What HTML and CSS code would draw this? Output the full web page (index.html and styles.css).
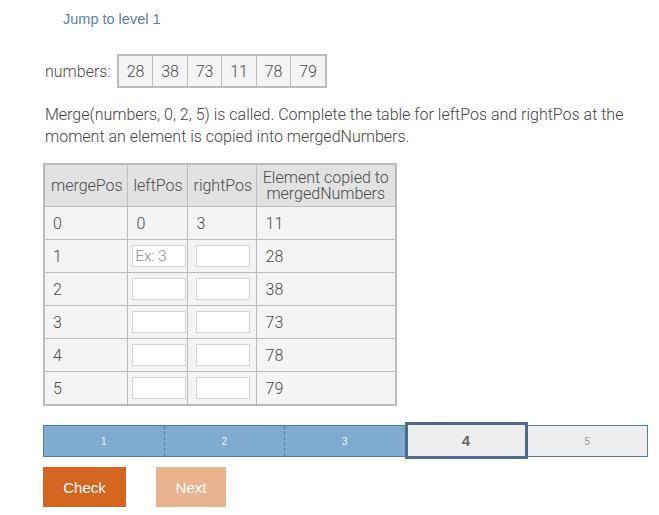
FILE: index.html
```html
<!DOCTYPE html>
<html>
<head>
<meta charset="utf-8">
<link rel="stylesheet" href="styles.css">
</head>
<body>
<div class="page">
  <div class="jump">Jump to level 1</div>
  <div class="numbers-row">
    <span class="numbers-label">numbers:</span>
    <div class="array">
      <span class="cell">28</span><span class="cell">38</span><span class="cell">73</span><span class="cell">11</span><span class="cell">78</span><span class="cell">79</span>
    </div>
  </div>
  <p class="prompt">Merge(numbers, 0, 2, 5) is called. Complete the table for leftPos and rightPos at the moment an element is copied into mergedNumbers.</p>
  <table class="merge-table">
    <colgroup>
      <col class="c1"><col class="c2"><col class="c3"><col class="c4">
    </colgroup>
    <thead>
      <tr><th>mergePos</th><th>leftPos</th><th>rightPos</th><th class="two-line">Element copied to<br>mergedNumbers</th></tr>
    </thead>
    <tbody>
      <tr><td>0</td><td>0</td><td>3</td><td>11</td></tr>
      <tr><td>1</td><td class="in"><input type="text" placeholder="Ex: 3"></td><td class="in"><input type="text"></td><td>28</td></tr>
      <tr><td>2</td><td class="in"><input type="text"></td><td class="in"><input type="text"></td><td>38</td></tr>
      <tr><td>3</td><td class="in"><input type="text"></td><td class="in"><input type="text"></td><td>73</td></tr>
      <tr><td>4</td><td class="in"><input type="text"></td><td class="in"><input type="text"></td><td>78</td></tr>
      <tr><td>5</td><td class="in"><input type="text"></td><td class="in"><input type="text"></td><td>79</td></tr>
    </tbody>
  </table>
  <div class="progress">
    <div class="seg done">1</div>
    <div class="seg done dash">2</div>
    <div class="seg done dash">3</div>
    <div class="seg current">4</div>
    <div class="seg todo">5</div>
  </div>
  <div class="buttons">
    <button class="btn check">Check</button>
    <button class="btn next">Next</button>
  </div>
</div>
</body>
</html>
```
FILE: styles.css
```css
html, body {
  margin: 0;
  padding: 0;
  background: #fff;
}
.page {
  padding: 0 11px 0 43px;
  font-family: Roboto, "Liberation Sans", sans-serif;
  font-weight: 300;
  color: #4a4a4a;
}
.jump {
  margin-top: 9px;
  padding-left: 20px;
  line-height: 20px;
  font-family: "Liberation Sans", Arial, sans-serif;
  font-weight: normal;
  font-size: 14.5px;
  color: #5b80a8;
}
.numbers-row {
  margin-top: 25px;
  display: flex;
  align-items: center;
  gap: 6px;
  padding-left: 2px;
}
.numbers-label {
  font-size: 16px;
}
.array {
  display: flex;
  border: 2px solid #bcbcbc;
  background: #f4f4f4;
  height: 30px;
}
.cell {
  width: 33.5px;
  display: flex;
  align-items: center;
  justify-content: center;
  font-size: 16px;
  border-left: 1px solid #bcbcbc;
}
.cell:first-child {
  border-left: none;
}
.prompt {
  margin: 16px 0 0 2px;
  font-size: 16px;
  line-height: 22px;
  color: #444;
}
.merge-table {
  margin-top: 15px;
  border-collapse: collapse;
  border: 2px solid #bcbcbc;
  table-layout: fixed;
  width: 352px;
  font-size: 16px;
  background: #f4f4f4;
}
.c1 { width: 83px; }
.c2 { width: 60px; }
.c3 { width: 69px; }
.c4 { width: 140px; }
.merge-table th {
  background: #e2e2e2;
  font-weight: 300;
  text-align: left;
  height: 41px;
  padding: 0 4px 0 6px;
  border: 1px solid #bcbcbc;
  line-height: 16px;
  color: #4a4a4a;
}
.merge-table th.two-line {
  text-align: center;
  padding: 0 4px;
}
.merge-table td {
  height: 32px;
  padding: 0 8px 0 9px;
  border: 1px solid #bcbcbc;
  color: #4a4a4a;
}
.merge-table td:first-child {
  padding-left: 8px;
}
.merge-table td.in {
  padding: 0 0 0 3px;
  text-align: center;
}
.merge-table input {
  box-sizing: border-box;
  width: 54px;
  height: 22px;
  border: 1px solid #cdd6dc;
  background: #fff;
  font-family: Roboto, sans-serif;
  font-weight: 300;
  font-size: 15px;
  padding: 0 3px;
  color: #555;
  vertical-align: middle;
  outline: none;
}
.merge-table input::placeholder {
  color: #888;
}
.progress {
  margin-top: 19px;
  display: flex;
  height: 30px;
  border: 1px solid #4f7ca6;
  width: 603px;
}
.seg {
  flex: 1;
  display: flex;
  align-items: center;
  justify-content: center;
  font-family: "Liberation Sans", Arial, sans-serif;
  font-weight: normal;
  font-size: 10px;
}
.seg.done {
  background: #7eabcf;
  color: #f0f5fa;
}
.seg.dash {
  border-left: 1px dashed #4f7ca6;
}
.seg.current {
  background: #eeeeee;
  border: 3px solid #4f6a8a;
  margin: -4px 0 -3px;
  flex: 0 0 117px;
  font-size: 15px;
  font-weight: bold;
  color: #666;
}
.seg.todo {
  background: #eeeeee;
  color: #999;
}
.buttons {
  margin-top: 10px;
  display: flex;
  gap: 30px;
}
.btn {
  height: 40px;
  border: none;
  font-family: "Liberation Sans", Arial, sans-serif;
  font-size: 15px;
  color: #fff;
  padding: 0;
}
.btn.check {
  width: 83px;
  background: #d5661f;
}
.btn.next {
  width: 70px;
  background: #e9b38f;
}
```
